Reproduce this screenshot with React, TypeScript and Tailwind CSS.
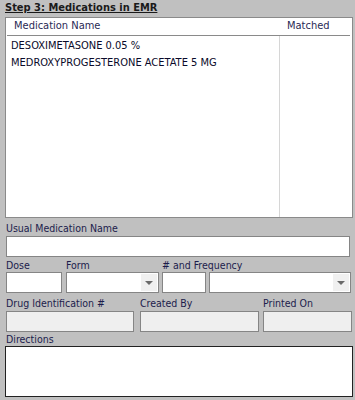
import React from 'react';

const font = { fontFamily: '"DejaVu Sans Condensed", Tahoma, "DejaVu Sans", sans-serif' };

function Label({ children, className = '' }: { children: React.ReactNode; className?: string }) {
  return <div className={`text-[10.5px] leading-[13px] text-[#1c1c4c] ${className}`}>{children}</div>;
}

function Box({ className = '', disabled = false }: { className?: string; disabled?: boolean }) {
  return (
    <div
      className={`h-[21px] border border-[#858585] ${disabled ? 'bg-[#efefef]' : 'bg-white'} ${className}`}
    />
  );
}

function Combo({ className = '' }: { className?: string }) {
  return (
    <div className={`h-[21px] border border-[#858585] bg-white flex justify-end p-[1px] ${className}`}>
      <div className="w-[16px] h-full bg-[#f0f0f0] flex items-center justify-center">
        <div className="w-0 h-0 border-l-[4px] border-r-[4px] border-t-[4px] border-l-transparent border-r-transparent border-t-[#6a6a6a]" />
      </div>
    </div>
  );
}

export default function App() {
  const meds = ['DESOXIMETASONE 0.05 %', 'MEDROXYPROGESTERONE ACETATE 5 MG'];

  return (
    <div className="w-[355px] h-[400px] bg-[#c0c0c0] overflow-hidden" style={font}>
      <div className="pl-[5px] pt-[1px] h-[17px] text-[11px] leading-[13px] font-bold underline underline-offset-[1px] text-[#1a1a1a]">
        Step 3: Medications in EMR
      </div>

      <div className="ml-[5px] w-[348px] h-[201px] bg-white border border-[#8a8a8a] flex flex-col">
        <div className="h-[18px] mx-[1px] mr-[2px] border-b border-[#8a8a8a] flex items-center text-[11px] text-[#2a2a55]">
          <div className="w-[274px] pl-[7px]">Medication Name</div>
          <div className="pl-[6px]">Matched</div>
        </div>
        <div className="flex flex-1">
          <div className="w-[274px] border-r border-[#d6d6d6] pt-[2px]">
            {meds.map((m) => (
              <div key={m} className="h-[17px] pl-[5px] flex items-center text-[11px] text-[#0a0a2a]">
                {m}
              </div>
            ))}
          </div>
          <div className="flex-1" />
        </div>
      </div>

      <div className="pl-[6px] h-[18px] flex items-end pb-[1px]">
        <Label>Usual Medication Name</Label>
      </div>
      <div className="pl-[6px]">
        <Box className="w-[344px]" />
      </div>

      <div className="pl-[6px] h-[15px] flex items-end">
        <Label className="w-[60px]">Dose</Label>
        <Label className="w-[96px]">Form</Label>
        <Label>{'# and Frequency'}</Label>
      </div>
      <div className="pl-[6px] flex gap-[4px]">
        <Box className="w-[56px]" />
        <Combo className="w-[93px]" />
        <Box className="w-[44px] -ml-[1px]" />
        <Combo className="w-[142px] -ml-[1px]" />
      </div>

      <div className="pl-[6px] h-[18px] flex items-end pb-[1px]">
        <Label className="w-[134px]">Drug Identification #</Label>
        <Label className="w-[123px]">Created By</Label>
        <Label>Printed On</Label>
      </div>
      <div className="pl-[6px] flex">
        <Box disabled className="w-[128px]" />
        <Box disabled className="w-[119px] ml-[6px]" />
        <Box disabled className="w-[89px] ml-[4px]" />
      </div>

      <div className="pl-[6px] h-[14px] flex items-end">
        <Label>Directions</Label>
      </div>
      <div className="pl-[5px]">
        <div className="w-[348px] h-[51px] bg-white border border-[#222222]" />
      </div>
    </div>
  );
}
